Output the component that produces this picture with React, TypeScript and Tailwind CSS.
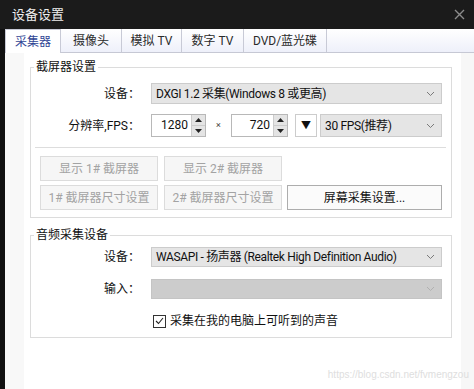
import type { ReactNode } from 'react';

const font = "font-['Roboto','Noto_Sans_CJK_SC',sans-serif]";

function Chevron({ color = '#7a7a7a' }: { color?: string }) {
  return (
    <svg width="9" height="6" viewBox="0 0 9 6">
      <path d="M1 1l3.5 3.5L8 1" fill="none" stroke={color} strokeWidth="1" />
    </svg>
  );
}

function Select({
  text,
  disabled,
  className,
}: {
  text?: string;
  disabled?: boolean;
  className: string;
}) {
  return (
    <div
      className={`flex items-center justify-between border pl-[4px] pr-[6px] ${
        disabled ? 'bg-[#cccccc] border-[#c4c4c4]' : 'bg-[#e5e5e5] border-[#cccccc]'
      } ${className}`}
    >
      <span className="text-[#111] whitespace-nowrap tracking-[-0.35px]">{text}</span>
      <Chevron color={disabled ? '#b0b0b0' : '#7a7a7a'} />
    </div>
  );
}

function Spin({ value, className }: { value: string; className: string }) {
  return (
    <div className={`flex h-[23px] border border-[#b8b8b8] bg-white ${className}`}>
      <span className="flex-1 text-right pr-[3px] leading-[21px] text-[#111]">{value}</span>
      <div className="flex w-[14px] flex-col border-l border-[#cccccc]">
        <div className="flex flex-1 items-center justify-center bg-[#e4e4e4] border-b border-[#cccccc]">
          <svg width="7" height="4" viewBox="0 0 7 4">
            <path d="M0 4L3.5 0L7 4Z" fill="#222" />
          </svg>
        </div>
        <div className="flex flex-1 items-center justify-center bg-[#e4e4e4]">
          <svg width="7" height="4" viewBox="0 0 7 4">
            <path d="M0 0L3.5 4L7 0Z" fill="#222" />
          </svg>
        </div>
      </div>
    </div>
  );
}

function Btn({
  children,
  disabled,
  className,
}: {
  children: ReactNode;
  disabled?: boolean;
  className: string;
}) {
  return (
    <div
      className={`flex h-[25px] items-center justify-center border whitespace-nowrap ${
        disabled
          ? 'border-[#dcdcdc] bg-[#f6f6f6] text-[#a3a3a3]'
          : 'border-[#adadad] bg-[#fbfbfb] text-[#111]'
      } ${className}`}
    >
      {children}
    </div>
  );
}

const tabs = [
  { label: '采集器', w: 'w-[56px]' },
  { label: '摄像头', w: 'w-[61px]' },
  { label: '模拟 TV', w: 'w-[60px]' },
  { label: '数字 TV', w: 'w-[62px]' },
  { label: 'DVD/蓝光碟', w: 'w-[83px]' },
];

export default function App() {
  return (
    <div className={`relative flex h-[389px] w-[474px] flex-col overflow-hidden bg-white text-[12px] ${font}`}>
      {/* Title bar */}
      <div className="flex h-[29px] shrink-0 items-center justify-between bg-[#1b1b1b] pl-[12px] pr-[9px]">
        <span className="text-[13px] text-[#eeeeee]">设备设置</span>
        <svg width="11" height="11" viewBox="0 0 11 11">
          <path d="M1 1L10 10M10 1L1 10" stroke="#8c8c8c" strokeWidth="1.4" />
        </svg>
      </div>

      <div className="flex flex-1">
        <div className="w-[5px] bg-[#111111]" />
        <div className="flex flex-1 flex-col">
          {/* Tabs */}
          <div className="flex h-[24px] border-b border-[#c6c8d4] bg-gradient-to-b from-white to-[#eef0fa]">
            {tabs.map((t, i) => (
              <div
                key={t.label}
                className={`${t.w} flex items-center justify-center whitespace-nowrap border-r border-[#c8cad6] ${
                  i === 0
                    ? 'relative -mb-px border-l border-t border-[#b4b6c2] bg-white text-[#2f4494]'
                    : 'text-[#2a2a2a]'
                }`}
              >
                {t.label}
              </div>
            ))}
          </div>

          <div className="flex flex-1">
            <div className="w-[19px] bg-[#f8f8f8]" />
            <div className="flex flex-1 flex-col pl-[6px] pr-[9px]">
              {/* Screen capture group */}
              <fieldset className="mt-[7px] border border-[#dcdcdc] pb-[7px]">
                <legend className="ml-[3px] px-[2px] leading-[14px] text-[#111]">截屏器设置</legend>
                <div className="mt-[9px] flex h-[21px] items-center">
                  <span className="w-[109px] text-right text-[#111]">设备：</span>
                  <Select text="DXGI 1.2 采集(Windows 8 或更高)" className="ml-[11px] h-[21px] w-[291px]" />
                </div>
                <div className="mt-[10px] flex h-[23px] items-center">
                  <span className="w-[109px] text-right text-[#111]">分辨率,FPS：</span>
                  <Spin value="1280" className="ml-[11px] w-[55px]" />
                  <span className="w-[25px] text-center text-[9px] text-[#444]">×</span>
                  <Spin value="720" className="w-[57px]" />
                  <div className="ml-[7px] flex h-[23px] w-[22px] items-center justify-center border border-[#cccccc] bg-white text-[10px] text-[#111]">
                    ▼
                  </div>
                  <Select text="30 FPS(推荐)" className="ml-[3px] h-[23px] w-[122px]" />
                </div>
                <div className="ml-[4px] mr-[5px] mt-[10px] h-px bg-[#dddddd]" />
                <div className="ml-[9px] mt-[8px] flex gap-[6px]">
                  <Btn disabled className="w-[118px]">显示 1# 截屏器</Btn>
                  <Btn disabled className="w-[118px]">显示 2# 截屏器</Btn>
                </div>
                <div className="ml-[9px] mt-[4px] flex">
                  <Btn disabled className="w-[118px]">1# 截屏器尺寸设置</Btn>
                  <Btn disabled className="ml-[6px] w-[118px]">2# 截屏器尺寸设置</Btn>
                  <Btn className="ml-[5px] w-[155px]">屏幕采集设置...</Btn>
                </div>
              </fieldset>

              {/* Audio group */}
              <fieldset className="mt-[10px] border border-[#dcdcdc] pb-[8px]">
                <legend className="ml-[3px] px-[2px] leading-[14px] text-[#111]">音频采集设备</legend>
                <div className="mt-[5px] flex h-[20px] items-center">
                  <span className="w-[109px] text-right text-[#111]">设备：</span>
                  <Select
                    text="WASAPI - 扬声器 (Realtek High Definition Audio)"
                    className="ml-[11px] h-[20px] w-[291px]"
                  />
                </div>
                <div className="mt-[12px] flex h-[20px] items-center">
                  <span className="w-[109px] text-right text-[#111]">输入：</span>
                  <Select disabled className="ml-[11px] h-[20px] w-[291px]" />
                </div>
                <div className="mt-[14px] flex h-[16px] items-center pl-[122px]">
                  <div className="flex h-[13px] w-[13px] items-center justify-center border border-[#333] bg-white">
                    <svg width="9" height="8" viewBox="0 0 9 8">
                      <path d="M1 4l2.5 2.5L8 1" fill="none" stroke="#222" strokeWidth="1.1" />
                    </svg>
                  </div>
                  <span className="ml-[4px] text-[#111]">采集在我的电脑上可听到的声音</span>
                </div>
              </fieldset>
            </div>
            <div className="w-[13px] bg-[#f7f7f7]" />
          </div>
        </div>
      </div>

      <span className="absolute bottom-[7px] right-[5px] font-['Liberation_Sans',sans-serif] text-[10px] text-[#dedede]">
        https://blog.csdn.net/fvmengzou
      </span>
    </div>
  );
}
